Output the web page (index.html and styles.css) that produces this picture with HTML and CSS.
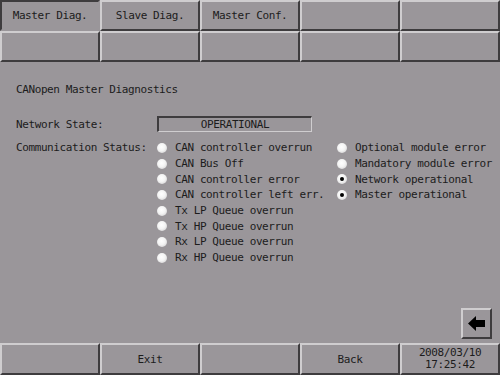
FILE: index.html
```html
<!DOCTYPE html>
<html>
<head>
<meta charset="utf-8">
<link rel="stylesheet" href="styles.css">
</head>
<body>
<div class="screen">
  <div class="tabs">
    <div class="tile active">Master Diag.</div>
    <div class="tile">Slave Diag.</div>
    <div class="tile">Master Conf.</div>
    <div class="tile"></div>
    <div class="tile"></div>
    <div class="tile"></div>
    <div class="tile"></div>
    <div class="tile"></div>
    <div class="tile"></div>
    <div class="tile"></div>
  </div>
  <div class="content">
    <div class="title">CANopen Master Diagnostics</div>
    <div class="state-row">
      <div class="label">Network State:</div>
      <div class="state-box">OPERATIONAL</div>
    </div>
    <div class="status-row">
      <div class="label line">Communication Status:</div>
      <ul class="list list-left">
        <li><span class="radio"></span>CAN controller overrun</li>
        <li><span class="radio"></span>CAN Bus Off</li>
        <li><span class="radio"></span>CAN controller error</li>
        <li><span class="radio"></span>CAN controller left err.</li>
        <li><span class="radio"></span>Tx LP Queue overrun</li>
        <li><span class="radio"></span>Tx HP Queue overrun</li>
        <li><span class="radio"></span>Rx LP Queue overrun</li>
        <li><span class="radio"></span>Rx HP Queue overrun</li>
      </ul>
      <ul class="list list-right">
        <li><span class="radio"></span>Optional module error</li>
        <li><span class="radio"></span>Mandatory module error</li>
        <li><span class="radio on"></span>Network operational</li>
        <li><span class="radio on"></span>Master operational</li>
      </ul>
    </div>
    <div class="arrow-row">
      <div class="arrow-btn">
        <svg width="17" height="15" viewBox="0 0 17 15"><polygon points="0,7.5 8,0 8,4 17,4 17,11 8,11 8,15" fill="#000"/></svg>
      </div>
    </div>
  </div>
  <div class="footer">
    <div class="tile"></div>
    <div class="tile">Exit</div>
    <div class="tile"></div>
    <div class="tile">Back</div>
    <div class="tile clock"><span class="clock-line">2008/03/10</span><span class="clock-line">17:25:42</span></div>
  </div>
</div>
</body>
</html>
```
FILE: styles.css
```css
html, body {
  margin: 0;
  padding: 0;
  background: #9a969a;
}
.screen {
  width: 500px;
  height: 375px;
  display: flex;
  flex-direction: column;
  background: #9a969a;
  color: #1c1c1c;
  font-family: "DejaVu Sans Mono", "Liberation Mono", monospace;
  font-size: 11px;
  letter-spacing: -0.4px;
  overflow: hidden;
}
.tabs {
  display: grid;
  grid-template-columns: repeat(5, 100px);
  grid-template-rows: 31px 31px;
}
.tile {
  box-sizing: border-box;
  border-top: 2px solid #cfcdcf;
  border-left: 2px solid #cfcdcf;
  border-right: 2px solid #3e3c3e;
  border-bottom: 2px solid #3e3c3e;
  display: flex;
  align-items: center;
  justify-content: center;
  background: #9a969a;
}
.tile.active {
  border-top: 2px solid #3e3c3e;
  border-left: 2px solid #3e3c3e;
  border-right: 2px solid #9a969a;
  border-bottom: 2px solid #9a969a;
}
.content {
  flex: 1;
  display: flex;
  flex-direction: column;
  padding: 0 8px 4px 16px;
}
.title {
  margin-top: 20px;
  line-height: 16px;
}
.state-row {
  margin-top: 18px;
  display: flex;
  align-items: center;
  height: 16px;
}
.label {
  width: 141px;
  flex: none;
}
.label.line {
  line-height: 15.7px;
  height: 15.7px;
}
.state-box {
  box-sizing: border-box;
  width: 155px;
  height: 16px;
  border-top: 2px solid #3e3c3e;
  border-left: 2px solid #3e3c3e;
  border-right: 1px solid #cfcdcf;
  border-bottom: 1px solid #cfcdcf;
  display: flex;
  align-items: center;
  justify-content: center;
}
.status-row {
  margin-top: 8px;
  display: flex;
}
.list {
  list-style: none;
  margin: 0;
  padding: 0;
}
.list-left {
  width: 180px;
  flex: none;
}
.list li {
  height: 15.7px;
  display: flex;
  align-items: center;
  gap: 8px;
  white-space: nowrap;
}
.radio {
  width: 10px;
  height: 10px;
  border-radius: 50%;
  background: radial-gradient(circle at 45% 40%, #ffffff 0, #f4f4f4 45%, #c8c6c8 100%);
  display: flex;
  align-items: center;
  justify-content: center;
  flex: none;
}
.radio.on::after {
  content: "";
  width: 4px;
  height: 4px;
  border-radius: 50%;
  background: #000;
}
.arrow-row {
  margin-top: auto;
  display: flex;
  justify-content: flex-end;
}
.arrow-btn {
  box-sizing: border-box;
  width: 31px;
  height: 31px;
  border-top: 2px solid #cfcdcf;
  border-left: 2px solid #cfcdcf;
  border-right: 2px solid #3e3c3e;
  border-bottom: 2px solid #3e3c3e;
  display: flex;
  align-items: center;
  justify-content: center;
}
.footer {
  display: grid;
  grid-template-columns: repeat(5, 100px);
  grid-template-rows: 32px;
}
.clock {
  flex-direction: column;
}
.clock-line {
  display: block;
  line-height: 12px;
  height: 12px;
}
```
